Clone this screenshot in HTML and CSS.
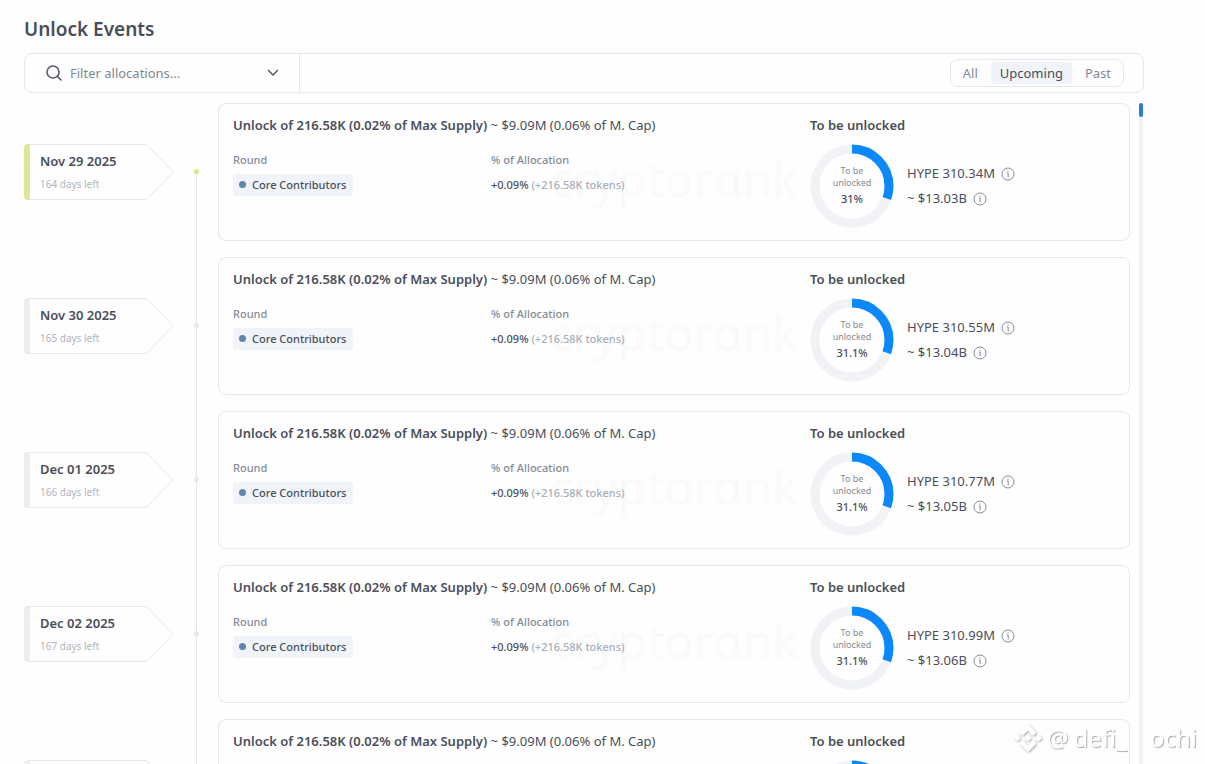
FILE: index.html
```
<!DOCTYPE html>
<html lang="en">
<head>
    <meta charset="UTF-8">
    <meta name="viewport" content="width=device-width, initial-scale=1.0">
    <title>Unlock Events</title>
    <link rel="stylesheet" href="styles.css">
</head>
<body>
    <main class="page">
        <h1 class="title">Unlock Events</h1>

        <!-- Filter bar -->
        <div class="toolbar">
            <div class="filter">
                <svg class="search-icon" viewBox="0 0 16 16" aria-hidden="true">
                    <circle cx="7" cy="7" r="6"/>
                    <path d="M11.4 11.4L15 15"/>
                </svg>
                <input type="text" class="filter-input" placeholder="Filter allocations..." aria-label="Filter allocations">
                <button type="button" class="filter-toggle" aria-label="Show allocations">
                    <svg viewBox="0 0 12 8"><path d="M1.5 1.5L6 6l4.500-4.500"/></svg>
                </button>
            </div>
            <div class="tabs">
                <button type="button">All</button>
                <button type="button" class="active">Upcoming</button>
                <button type="button">Past</button>
            </div>
        </div>

        <!-- Events list -->
        <div class="list">
            <div class="events" id="events"></div>
            <div class="scroll-track"><div class="scroll-thumb"></div></div>
        </div>
    </main>

    <div class="signature">
        <svg viewBox="0 0 28 28" aria-hidden="true">
            <path d="M14 0l8.500 8.500-3.300 3.300-5.200-5.200-5.200 5.200-3.300-3.300zM14 28l8.500-8.500-3.300-3.300-5.200 5.200-5.200-5.200-3.300 3.300zM14 10.700l3.300 3.300-3.300 3.300-3.300-3.300zM3.300 10.700l3.300 3.300-3.300 3.300L0 14zM24.700 10.700L28 14l-3.300 3.300-3.300-3.300z"/>
        </svg>
        <span>@</span>
        <span>defi_</span>
        <span class="signature-end">ochi</span>
    </div>

    <script>
        const events = [
            { date: "Nov 29 2025", days: 164, percent: 31, tokens: "310.34M", value: "$13.03B" },
            { date: "Nov 30 2025", days: 165, percent: 31.1, tokens: "310.55M", value: "$13.04B" },
            { date: "Dec 01 2025", days: 166, percent: 31.1, tokens: "310.77M", value: "$13.05B" },
            { date: "Dec 02 2025", days: 167, percent: 31.1, tokens: "310.99M", value: "$13.06B" },
            { date: "Dec 03 2025", days: 168, percent: 31.1, tokens: "311.20M", value: "$13.07B" }
        ];

        const infoIcon = `
            <button type="button" class="info" aria-label="More information">
                <svg viewBox="0 0 14 14">
                    <circle cx="7" cy="7" r="6"/>
                    <path d="M5.800 6H7.200V10.300M7 3.500V4.700"/>
                </svg>
            </button>`;

        document.getElementById("events").innerHTML = events.map(event => `
            <section class="event">
                <div class="date">
                    <svg class="date-shape" viewBox="0 0 150 56" aria-hidden="true">
                        <path class="outline" d="M4 .5H122.500L149.300 28L122.500 55.500H4A3.500 3.500 0 0 1 .5 52V4A3.500 3.500 0 0 1 4 .5Z"/>
                        <path class="edge" d="M6 0V56H4A4 4 0 0 1 0 52V4A4 4 0 0 1 4 0Z"/>
                    </svg>
                    <strong>${event.date}</strong>
                    <span>${event.days} days left</span>
                </div>
                <div class="axis"><i class="dot"></i></div>
                <article class="card">
                    <div class="watermark" aria-hidden="true">cryptor&#593;nk</div>
                    <div class="unlock">
                        <h2><b>Unlock of 216.58K (0.02% of Max Supply)</b> ~ $9.09M (0.06% of M. Cap)</h2>
                        <table class="rounds">
                            <thead>
                                <tr><th>Round</th><th>% of Allocation</th></tr>
                            </thead>
                            <tbody>
                                <tr>
                                    <td><span class="tag">Core Contributors</span></td>
                                    <td>+0.09% <small>(+216.58K tokens)</small></td>
                                </tr>
                            </tbody>
                        </table>
                    </div>
                    <div class="remaining">
                        <h3>To be unlocked</h3>
                        <div class="remaining-body">
                            <div class="donut">
                                <svg viewBox="0 0 84 84" aria-hidden="true">
                                    <circle class="ring" cx="42" cy="42" r="37"/>
                                    <circle class="arc" cx="42" cy="42" r="37" pathLength="100" stroke-dasharray="${event.percent - 0.5} 100"/>
                                </svg>
                                <span>To be<br>unlocked</span>
                                <strong>${event.percent}%</strong>
                            </div>
                            <div class="amounts">
                                <p>HYPE ${event.tokens} ${infoIcon}</p>
                                <p>~ ${event.value} ${infoIcon}</p>
                            </div>
                        </div>
                    </div>
                </article>
            </section>`).join("");
    </script>
</body>
</html>
```
FILE: styles.css
```
* {
    box-sizing: border-box;
}
body {
    margin: 0;
    height: 100vh;
    overflow: hidden;
    background-color: #fefefe;
    color: #4a4e5a;
    font-family: "Noto Sans", sans-serif;
    font-size: 13px;
}
button {
    padding: 0;
    border: none;
    background: none;
    color: inherit;
    font: inherit;
    cursor: pointer;
}
svg {
    display: block;
    fill: none;
}
.page {
    display: flex;
    flex-direction: column;
    height: 100vh;
    padding: 16px 61px 0 24px;
}
.title {
    margin: 0 0 11px;
    font-size: 19px;
    line-height: 26px;
    font-weight: 600;
}

/* Filter bar */
.toolbar {
    display: flex;
    flex-shrink: 0;
    justify-content: space-between;
    align-items: center;
    height: 40px;
    margin-bottom: 10px;
    padding-right: 19px;
    border: 1px solid #e3e7ea;
    border-radius: 8px;
}
.filter {
    display: flex;
    align-items: center;
    gap: 8px;
    width: 275px;
    height: 100%;
    padding: 0 20px 0 21px;
    border-right: 1px solid #e3e7ea;
}
.search-icon {
    width: 16px;
    height: 16px;
    flex-shrink: 0;
    stroke: #5a5e69;
    stroke-width: 1.6;
    stroke-linecap: round;
}
.filter-input {
    flex: 1;
    min-width: 0;
    padding: 0;
    border: none;
    outline: none;
    background: none;
    color: #4a4e5a;
    font: inherit;
}
.filter-input::placeholder {
    color: #7f8793;
    opacity: 1;
}
.filter-toggle svg {
    width: 12px;
    height: 8px;
    stroke: #5a5e69;
    stroke-width: 1.6;
    stroke-linecap: round;
    stroke-linejoin: round;
}
.tabs {
    display: flex;
    align-items: center;
    gap: 4px;
    height: 28px;
    padding: 0 3px;
    border: 1px solid #e3e7ea;
    border-radius: 8px;
    color: #848b98;
}
.tabs button {
    height: 22px;
    padding: 0 9px;
    border-radius: 4px;
}
.tabs .active {
    background-color: #f0f3f8;
    color: #4a4e5a;
}

/* Events list */
.list {
    display: flex;
    flex: 1;
    gap: 9px;
    min-height: 0;
}
.events {
    flex: 1;
    overflow: hidden;
}
.scroll-track {
    width: 4px;
    margin-right: 1px;
    background-color: #f0f4f9;
}
.scroll-thumb {
    height: 14px;
    border-radius: 2px;
    background-color: #2a7fd0;
}
.event {
    display: grid;
    grid-template-columns: 150px 44px 1fr;
}
.date {
    position: relative;
    display: flex;
    flex-direction: column;
    gap: 5px;
    height: 56px;
    margin-top: 41px;
    padding: 8px 16px;
}
.date-shape {
    position: absolute;
    inset: 0;
    width: 150px;
    height: 56px;
}
.outline {
    stroke: #e3e7ea;
}
.edge {
    fill: #eceef0;
}
.event:first-child .edge {
    fill: #d8ea97;
}
.date strong {
    font-weight: 600;
    line-height: 18px;
}
.date span {
    color: #b0b5be;
    font-size: 10px;
    line-height: 18px;
}
.axis {
    padding-top: 66px;
    background: linear-gradient(#e3e5e8, #e3e5e8) 22px 0 / 1px 100% no-repeat;
}
.event:first-child .axis {
    background-position: 22px 69px;
}
.dot {
    display: block;
    width: 5px;
    height: 5px;
    margin-left: 20px;
    border-radius: 50%;
    background-color: #e6e9ec;
}
.event:first-child .dot {
    background-color: #d3e88a;
}

/* Event card */
.card {
    position: relative;
    display: flex;
    height: 138px;
    margin-bottom: 16px;
    padding: 12px 14px;
    border: 1px solid #e3e7ea;
    border-radius: 8px;
}
.watermark {
    position: absolute;
    inset: 0;
    color: #f8fafc;
    font-size: 48px;
    line-height: 150px;
    font-weight: 400;
    text-align: center;
}
.unlock,
.remaining {
    position: relative;
}
.unlock {
    flex: 577;
}
.remaining {
    flex: 305;
}
.card h2,
.card h3 {
    margin: 0;
    font-size: 13px;
    line-height: 18px;
    font-weight: 400;
}
.card b,
.card h3 {
    font-weight: 600;
}
.rounds {
    width: 100%;
    margin-top: 16px;
    border-collapse: collapse;
    table-layout: fixed;
    font-size: 11px;
}
.rounds th,
.rounds td {
    padding: 0;
    text-align: left;
}
.rounds th {
    height: 18px;
    color: #858c98;
    font-weight: 500;
}
.rounds th:first-child {
    width: 258px;
}
.rounds td {
    height: 33px;
    font-weight: 500;
}
.rounds small {
    color: #a8afba;
    font-size: 11px;
}
.tag {
    display: inline-flex;
    align-items: center;
    gap: 6px;
    height: 22px;
    padding: 0 7px 0 6px;
    border-radius: 3px;
    background-color: #f0f4f9;
}
.tag::before {
    content: "";
    width: 7px;
    height: 7px;
    border-radius: 50%;
    background-color: #6285ad;
}
.remaining-body {
    display: flex;
    align-items: center;
    gap: 13px;
    margin-top: 10px;
}
.donut {
    position: relative;
    display: flex;
    flex-direction: column;
    align-items: center;
    justify-content: center;
    width: 84px;
    height: 84px;
    padding-top: 2px;
    text-align: center;
}
.donut svg {
    position: absolute;
    inset: 0;
    transform: rotate(-90deg);
}
.donut circle {
    stroke-width: 9;
}
.ring {
    stroke: #f0f2f6;
}
.arc {
    stroke: #0b88fb;
}
.donut span {
    color: #858c98;
    font-size: 9px;
    line-height: 12px;
}
.donut strong {
    font-size: 11px;
    line-height: 20px;
    font-weight: 500;
}
.amounts p {
    display: flex;
    align-items: center;
    gap: 6px;
    margin: 0;
    line-height: 25px;
}
.info svg {
    width: 14px;
    height: 14px;
    stroke: #858c98;
    stroke-width: 1;
}

/* Signature in the corner */
.signature {
    position: fixed;
    right: 8px;
    bottom: 10px;
    display: flex;
    align-items: center;
    gap: 5px;
    color: #fff;
    font-size: 24px;
    line-height: 32px;
    text-shadow: 1px 1px 1px #a9abb2;
}
.signature svg {
    width: 28px;
    height: 28px;
    fill: #fff;
    filter: drop-shadow(1px 1px 1px #a9abb2);
}
.signature-end {
    margin-left: 18px;
}
```
